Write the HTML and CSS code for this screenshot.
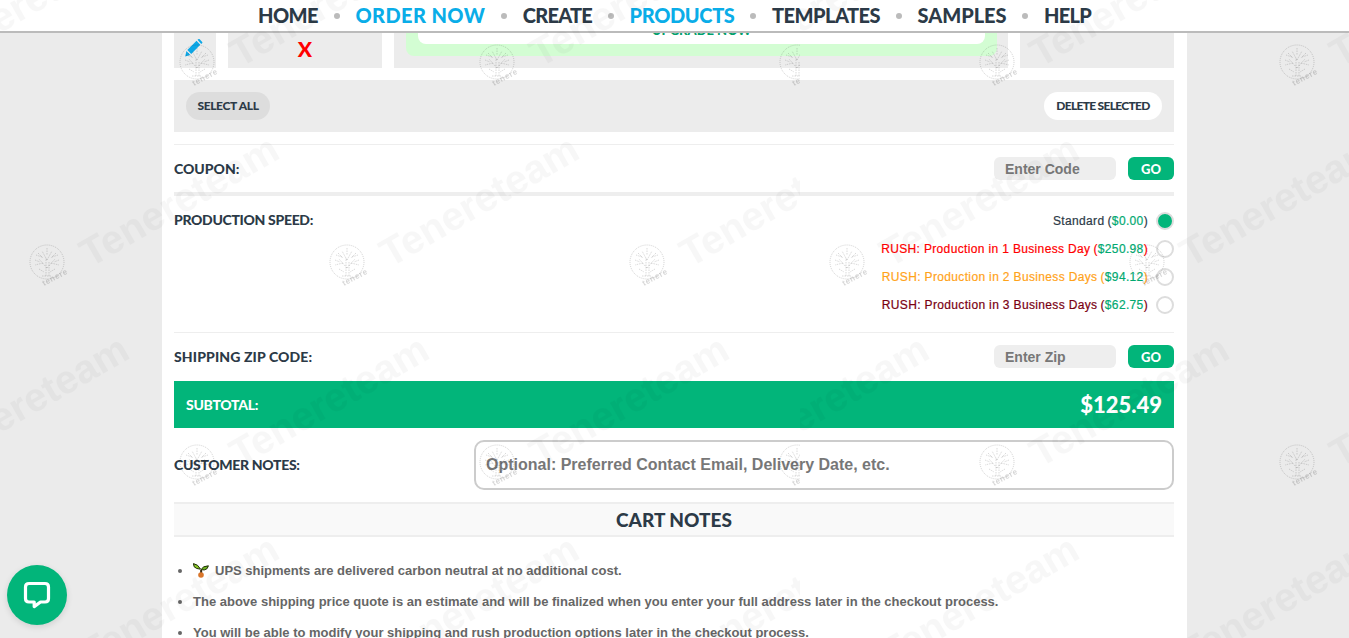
FILE: index.html
```html
<!DOCTYPE html>
<html lang="en">
<head>
<meta charset="utf-8">
<title>Cart</title>
<link rel="stylesheet" href="styles.css">
</head>
<body>
<header class="nav">
  <a class="nav-link n-home">HOME</a><i class="dot"></i>
  <a class="nav-link blue n-order">ORDER NOW</a><i class="dot"></i>
  <a class="nav-link n-create">CREATE</a><i class="dot"></i>
  <a class="nav-link blue n-products">PRODUCTS</a><i class="dot"></i>
  <a class="nav-link n-templates">TEMPLATES</a><i class="dot"></i>
  <a class="nav-link n-samples">SAMPLES</a><i class="dot"></i>
  <a class="nav-link n-help">HELP</a>
</header>
<main class="page">
  <section class="item-row">
    <div class="cell cell-center">
      <svg class="pencil" viewBox="0 0 20 19" width="18" height="18" preserveAspectRatio="none"><path d="M0.2 18.6 L1.6 12.6 L5.9 16.9 Z M2.6 11.6 L12.8 1.9 L17 6.2 L6.9 15.9 Z M13.9 0.9 L15.2 0 Q15.8 -0.2 16.3 0.3 L19.1 3.2 Q19.5 3.7 19.2 4.2 L18 5.2 Z" fill="#0ea7e6"/></svg>
    </div>
    <div class="cell cell-center"><span class="remove">X</span></div>
    <div class="cell cell-upgrade">
      <div class="upgrade-outer"><div class="upgrade-inner"><span class="upgrade-text">UPGRADE NOW</span></div></div>
    </div>
    <div class="cell"></div>
  </section>

  <section class="select-bar">
    <button class="pill pill-grey">SELECT ALL</button>
    <button class="pill pill-white">DELETE SELECTED</button>
  </section>

  <section class="row row-coupon">
    <span class="label">COUPON:</span>
    <div class="field-group"><span class="field">Enter Code</span><button class="go">GO</button></div>
  </section>

  <section class="row-speed">
    <span class="label label-tight">PRODUCTION SPEED:</span>
    <div class="speeds">
      <div class="speed"><span class="speed-name c-dark">Standard</span><span class="speed-price c-dark">(<b>$0.00</b>)</span><i class="radio radio-on"></i></div>
      <div class="speed"><span class="speed-name c-red">RUSH: Production in 1 Business Day</span><span class="speed-price c-red">(<b>$250.98</b>)</span><i class="radio"></i></div>
      <div class="speed"><span class="speed-name c-orange">RUSH: Production in 2 Business Days</span><span class="speed-price c-orange">(<b>$94.12</b>)</span><i class="radio"></i></div>
      <div class="speed"><span class="speed-name c-maroon">RUSH: Production in 3 Business Days</span><span class="speed-price c-maroon">(<b>$62.75</b>)</span><i class="radio"></i></div>
    </div>
  </section>

  <section class="row row-zip">
    <span class="label label-loose">SHIPPING ZIP CODE:</span>
    <div class="field-group"><span class="field">Enter Zip</span><button class="go">GO</button></div>
  </section>

  <section class="subtotal">
    <span class="subtotal-label">SUBTOTAL:</span>
    <span class="subtotal-price">$125.49</span>
  </section>

  <section class="notes">
    <span class="label label-tight">CUSTOMER NOTES:</span>
    <div class="notes-box">Optional: Preferred Contact Email, Delivery Date, etc.</div>
  </section>

  <h2 class="cart-title">CART NOTES</h2>
  <ul class="cart-list">
    <li><svg class="sprout" viewBox="0 0 16 16" width="16" height="16"><path d="M8 8 Q8.4 10 8 12" stroke="#3a2a10" stroke-width="2" fill="none"/><path d="M7.6 7.2 Q5 2.2 0.4 1.6 Q0.4 5.6 3.6 6.4 Q6 7 7.6 7.2 Z" fill="#8ac926" stroke="#1e2d0a" stroke-width="1"/><path d="M8.2 7.4 Q9.8 4 15.4 3.8 Q14.6 7.4 11.8 7.8 Q9.6 8.2 8.2 7.4 Z" fill="#6fb51f" stroke="#1e2d0a" stroke-width="1"/><circle cx="8" cy="13" r="2.8" fill="#d9762b"/></svg>UPS shipments are delivered carbon neutral at no additional cost.</li>
    <li>The above shipping price quote is an estimate and will be finalized when you enter your full address later in the checkout process.</li>
    <li>You will be able to modify your shipping and rush production options later in the checkout process.</li>
  </ul>
</main>

<button class="chat" aria-label="Chat">
  <svg viewBox="0 0 28 28" width="28" height="28"><path d="M6 2.5 H22 Q25.5 2.5 25.5 6 V17.5 Q25.5 21 22 21 H17.5 L11.2 25.6 V21 H6 Q2.5 21 2.5 17.5 V6 Q2.5 2.5 6 2.5 Z" fill="none" stroke="#fff" stroke-width="3.2" stroke-linejoin="round"/></svg>
</button>

<svg class="watermark" aria-hidden="true" width="100%" height="100%">
  <defs>
    <g id="wm">
      <circle r="17" fill="none" stroke="#000" stroke-opacity=".16" stroke-width="1" stroke-dasharray="1 1"/>
      <g fill="none" stroke="#000" stroke-opacity=".14" stroke-width="1" stroke-dasharray="1.5 1">
        <path d="M-1 14 V-4 M2 14 V0 M0 6 L-8 -3 M0 6 L8 -3 M-4 1 L-12 3 M4 1 L12 3 M0 -2 L-5 -11 M0 -2 L5 -11 M-5 -5 L-11 -7 M5 -5 L11 -7 M-5 14 L5 14 M-9 -9 L-4 -4 M9 -9 L4 -4 M-8 7 L-3 10 M8 7 L3 10 M-12 -2 L-7 0 M12 -2 L7 0 M0 -14 V-7"/>
      </g>
      <text class="wm-small" transform="translate(-3 24) rotate(-28)">tenere</text>
      <text class="wm-big" transform="translate(43 6) rotate(-30)">Tenereteam</text>
    </g>
    <pattern id="wm-tile" patternUnits="userSpaceOnUse" x="0" y="-60" width="800" height="400">
      <use href="#wm" x="-103" y="122"/>
      <use href="#wm" x="197" y="122"/>
      <use href="#wm" x="497" y="122"/>
      <use href="#wm" x="797" y="122"/>
      <use href="#wm" x="47" y="322"/>
      <use href="#wm" x="347" y="322"/>
      <use href="#wm" x="647" y="322"/>
    </pattern>
  </defs>
  <rect width="100%" height="100%" fill="url(#wm-tile)"/>
</svg>
</body>
</html>
```
FILE: styles.css
```css
* { box-sizing: border-box; }
html, body { height: 100%; overflow: hidden; }
body {
  margin: 0;
  background: #ebebeb;
  font-family: "Liberation Sans", Arial, sans-serif;
  color: #2c3a47;
}
button { font: inherit; border: 0; padding: 0; }

.nav {
  height: 33px;
  background: #fff;
  border-bottom: 2px solid #bbb;
  display: flex;
  align-items: center;
  justify-content: center;
  gap: 15.8px;
  font-family: Lato, sans-serif;
  font-weight: 900;
  font-size: 20px;
  line-height: 31px;
}
.nav-link { color: #2c3a47; }
.nav-link.blue { color: #0aade8; }
.n-home { letter-spacing: -.6px; }
.n-order { letter-spacing: .4px; }
.n-create { letter-spacing: -.77px; }
.n-products { letter-spacing: -.38px; }
.n-templates { letter-spacing: -.55px; }
.n-samples { letter-spacing: -.05px; }
.n-help { letter-spacing: -.75px; }
.dot { width: 6px; height: 6px; border-radius: 50%; background: #bbb; }

.page {
  width: 1025px;
  margin: 0 auto;
  padding: 0 13px 0 12px;
  background: #fff;
  min-height: 605px;
}
.item-row {
  display: grid;
  grid-template-columns: 42px 154px 614px 154px;
  gap: 12px;
  height: 35px;
}
.cell { background: #ececec; overflow: hidden; }
.cell-center { display: flex; align-items: center; justify-content: center; }
.pencil { margin-top: -6px; margin-left: -2px; }
.remove { color: #f00; font: 900 21px/1 Lato, sans-serif; margin-top: -4px; }
.cell-upgrade { display: flex; align-items: flex-end; padding: 0 11px 12px 12px; }
.upgrade-outer {
  width: 100%;
  height: 35px;
  background: #d3fdd3;
  padding: 0 12px 12px;
  border-radius: 0 0 8px 8px;
}
.upgrade-inner {
  height: 100%;
  background: #fff;
  border-radius: 0 0 8px 8px;
  display: flex;
  align-items: flex-end;
  justify-content: center;
  overflow: hidden;
}
.upgrade-text {
  color: #02a06c;
  font: 900 13px/12px Lato, sans-serif;
  margin-bottom: 8px;
}

.select-bar {
  margin-top: 12px;
  height: 52px;
  padding: 12px;
  background: #ececec;
  display: flex;
  justify-content: space-between;
}
.pill {
  height: 28px;
  border-radius: 14px;
  color: #2c3a47;
  font: 900 12px/28px Lato, sans-serif;
}
.pill-grey { width: 84px; background: #ddd; letter-spacing: -.35px; }
.pill-white { width: 118px; background: #fff; letter-spacing: -.7px; }

.label { font: 900 14px/1 Lato, sans-serif; color: #2c3a47; }
.label-tight { letter-spacing: -.32px; }
.label-loose { letter-spacing: .12px; }
.row { display: flex; align-items: center; justify-content: space-between; }
.row-coupon {
  margin-top: 12px;
  height: 52px;
  border-top: 1px solid #eee;
  border-bottom: 4px solid #eee;
}
.row-zip { height: 48px; padding-bottom: 1px; }
.field-group { display: flex; gap: 12px; }
.field {
  width: 122px;
  height: 23px;
  padding-left: 11px;
  background: #eee;
  border-radius: 6px;
  color: #777;
  font: 700 14px/24px "Liberation Sans", Arial, sans-serif;
}
.go {
  width: 46px;
  height: 23px;
  background: #02b57a;
  border-radius: 6px;
  color: #fff;
  font: 900 13px/24px Lato, sans-serif;
}

.row-speed {
  height: 137px;
  padding-top: 17px;
  border-bottom: 1px solid #eee;
  display: flex;
  justify-content: space-between;
  align-items: flex-start;
}
.speeds { display: flex; flex-direction: column; gap: 10px; margin-top: -1px; }
.speed {
  height: 18px;
  display: flex;
  align-items: center;
  justify-content: flex-end;
  font-size: 12px;
  letter-spacing: .35px;
  -webkit-text-stroke: .2px;
}
.speed-price { margin-left: 3px; }
.speed-price b { color: #02a971; font-weight: 400; }
.c-dark { color: #2c3a47; }
.c-red { color: #f00; }
.c-orange { color: #ffa31a; }
.c-maroon { color: #7a0012; }
.radio {
  width: 18px;
  height: 18px;
  margin-left: 8px;
  border-radius: 50%;
  border: 2px solid #ddd;
  background: #fff;
  -webkit-text-stroke: 0;
}
.radio-on { background: #02b57a; }

.subtotal {
  height: 47px;
  padding: 0 12px;
  background: #02b57a;
  color: #fff;
  display: flex;
  align-items: center;
  justify-content: space-between;
}
.subtotal-label { font: 900 14px/1 Lato, sans-serif; letter-spacing: -.32px; }
.subtotal-price { font: 900 22px/1 Lato, sans-serif; }

.notes {
  height: 74px;
  display: flex;
  align-items: center;
  justify-content: space-between;
}
.notes-box {
  width: 700px;
  height: 50px;
  padding-left: 10px;
  border: 2px solid #ccc;
  border-radius: 10px;
  color: #777;
  font-weight: 700;
  font-size: 16px;
  line-height: 45px;
}
.cart-title {
  margin: 0;
  height: 35px;
  background: #f9f9f9;
  border-top: 2px solid #eee;
  border-bottom: 2px solid #eee;
  text-align: center;
  color: #2c3a47;
  font: 900 19px/32px Lato, sans-serif;
}
.cart-list {
  margin: 0;
  padding: 25px 0 0 19px;
  list-style: disc;
  color: #666;
  font-weight: 700;
  font-size: 13px;
  line-height: 16px;
}
.cart-list li { margin-bottom: 15px; }
.sprout { vertical-align: -3px; margin-right: 6px; }

.chat {
  position: fixed;
  left: 7px;
  top: 565px;
  width: 60px;
  height: 60px;
  border-radius: 50%;
  background: #02b57a;
  box-shadow: 0 2px 6px rgba(0,0,0,.12);
  display: flex;
  align-items: center;
  justify-content: center;
}

.watermark { position: fixed; left: 0; top: 0; pointer-events: none; }
.wm-big { font: 700 40px "Liberation Sans", Arial, sans-serif; fill: #000; fill-opacity: .03; }
.wm-small { font: 700 8px "Liberation Sans", Arial, sans-serif; fill: #000; fill-opacity: .16; letter-spacing: .6px; }
```
